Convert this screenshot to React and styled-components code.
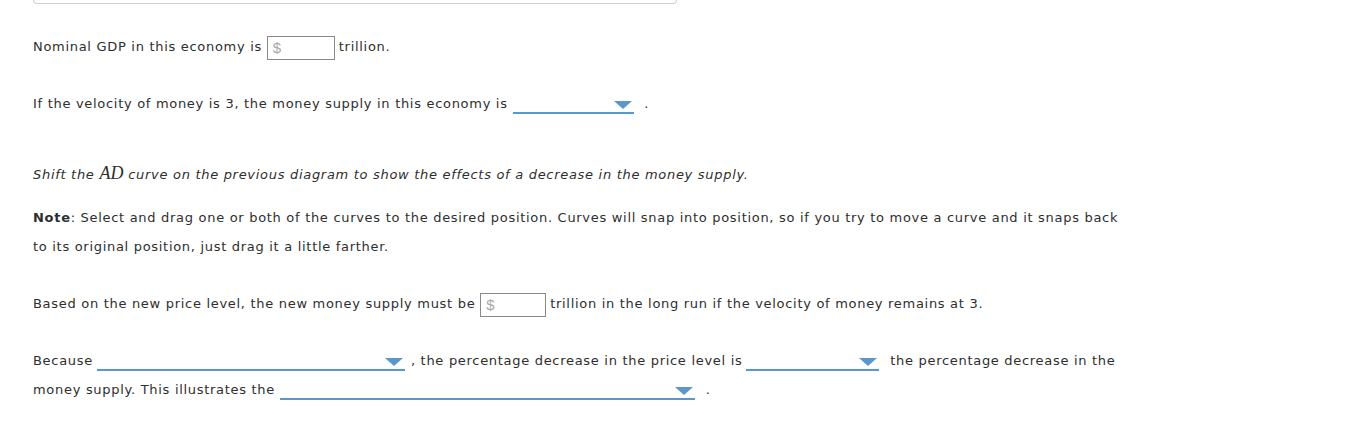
import React from "react";
import styled, { createGlobalStyle } from "styled-components";

const Global = createGlobalStyle`
  html, body { margin: 0; padding: 0; background: #fff; }
  body { font-family: Verdana, "DejaVu Sans", sans-serif; color: #333; }
`;

const Page = styled.div`
  display: flex;
  flex-direction: column;
  padding: 0 0 0 33px;
  width: 1326px;
`;

const TopBox = styled.div`
  width: 642px;
  height: 3px;
  border: 1px solid #cfcfcf;
  border-top: none;
  border-radius: 0 0 6px 6px;
`;

const Para = styled.p`
  margin: ${(p) => p.$mt || 0}px 0 0 0;
  font-size: 13px;
  letter-spacing: 0.7px;
  line-height: 29px;
  color: #2e2e2e;
  font-style: ${(p) => (p.$italic ? "italic" : "normal")};
  max-width: 1095px;
`;

const Math = styled.span`
  font-family: "Liberation Serif", "DejaVu Serif", serif;
  font-style: italic;
  font-size: 18px;
  letter-spacing: 0;
`;

const Bold = styled.b`
  font-weight: bold;
`;

const Field = styled.span`
  display: inline-flex;
  align-items: center;
  box-sizing: border-box;
  width: ${(p) => p.$w}px;
  height: 24px;
  border: 1px solid #8a8a8a;
  padding-left: 5px;
  margin: 0 4px 0 0;
  vertical-align: middle;
  color: #a8a8a8;
  font-family: "Liberation Sans", Arial, sans-serif;
  font-size: 15px;
  letter-spacing: 0;
  line-height: 1;
`;

const Select = styled.span`
  display: inline-block;
  position: relative;
  box-sizing: border-box;
  width: ${(p) => p.$w}px;
  height: 16px;
  border-bottom: 2px solid #5b96cc;
  vertical-align: -6px;
  margin: 0 ${(p) => p.$mr ?? 6}px 0 ${(p) => p.$ml ?? 0}px;
`;

const Arrow = styled.span`
  position: absolute;
  right: 2px;
  top: 3px;
  width: 0;
  height: 0;
  border-left: 9.5px solid transparent;
  border-right: 9.5px solid transparent;
  border-top: 8px solid #5b96cc;
`;

const Dropdown = ({ w, mr, ml }) => (
  <Select $w={w} $mr={mr} $ml={ml}>
    <Arrow />
  </Select>
);

export default function App() {
  return (
    <>
      <Global />
      <Page>
        <TopBox />
        <Para $mt={28}>
          Nominal GDP in this economy is <Field $w={68}>$</Field>trillion.
        </Para>
        <Para $mt={28}>
          If the velocity of money is 3, the money supply in this economy is{" "}
          <Dropdown w={121} /> .
        </Para>
        <Para $mt={41} $italic>
          Shift the <Math>AD</Math> curve on the previous diagram to show the
          effects of a decrease in the money supply.
        </Para>
        <Para $mt={14}>
          <Bold>Note</Bold>: Select and drag one or both of the curves to the
          desired position. Curves will snap into position, so if you try to
          move a curve and it snaps back to its original position, just drag it
          a little farther.
        </Para>
        <Para $mt={28}>
          Based on the new price level, the new money supply must be{" "}
          <Field $w={66}>$</Field>trillion in the long run if the velocity of
          money remains at 3.
        </Para>
        <Para $mt={28}>
          Because
          <Dropdown w={308} ml={4} />, the percentage decrease in the price
          level is
          <Dropdown w={133} ml={4} /> the percentage decrease in the money
          supply. This illustrates the <Dropdown w={415} /> .
        </Para>
      </Page>
    </>
  );
}
